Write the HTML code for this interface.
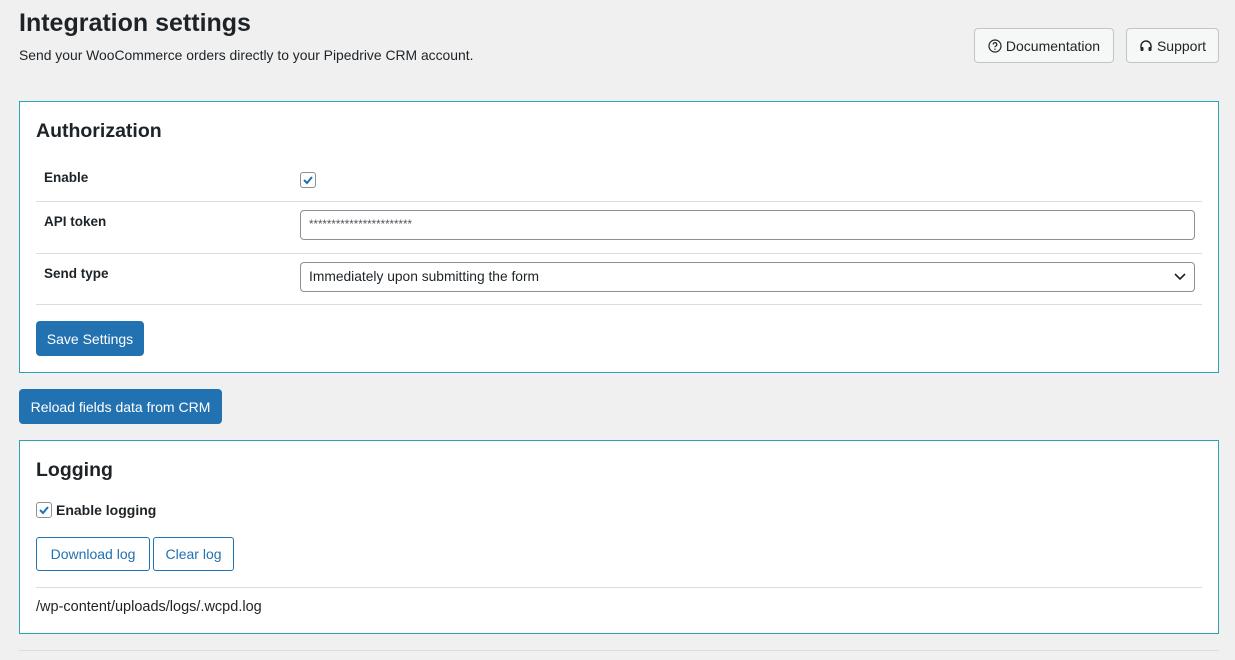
<!DOCTYPE html>
<html><head><meta charset="utf-8"><style>
*{box-sizing:border-box}
body{margin:0;width:1235px;height:660px;background:#f0f0f1;font-family:"Liberation Sans",sans-serif;color:#1d2327;font-size:14px;position:relative;overflow:hidden}
.a{position:absolute}
h1{position:absolute;left:19px;top:9px;margin:0;font-size:25px;font-weight:700;color:#1d2327}
.sub{left:19px;top:47px;font-size:13.9px}
.hb{position:absolute;top:28px;height:35px;border:1px solid #c3c4c7;border-radius:4px;background:#f6f7f7;font-size:14px;display:flex;align-items:center;justify-content:center;gap:4px}
.box{position:absolute;left:19px;width:1200px;background:#fff;border:1px solid #2ba3b3}
.box h2{position:absolute;left:16px;margin:0;font-size:19.5px;font-weight:700}
.lab{position:absolute;left:24px;font-weight:700;font-size:13.5px}
.hr{position:absolute;left:16px;right:16px;height:1px;background:#dcdcde}
.inp{position:absolute;left:280px;width:895px;height:30px;border:1px solid #8c8f94;border-radius:4px;font-size:13.8px;padding:6px 8px}
.btn{position:absolute;background:#2271b1;color:#fff;border-radius:4px;font-size:14px;display:flex;align-items:center;justify-content:center}
.ob{position:absolute;top:96px;height:34px;border:1px solid #2271b1;color:#2271b1;border-radius:3px;font-size:14px;display:flex;align-items:center;justify-content:center}
.cb{position:absolute;width:16px;height:16px;border:1px solid #8c8f94;border-radius:3px;background:#fff}
</style></head><body>
<h1>Integration settings</h1>
<div class="a sub">Send your WooCommerce orders directly to your Pipedrive CRM account.</div>
<div class="hb" style="left:974px;width:140px"><svg width="14" height="14" viewBox="0 0 14 14"><circle cx="7" cy="7" r="6" fill="none" stroke="#1d2327" stroke-width="1.2"/><path d="M5.2 5.5a1.8 1.8 0 1 1 2.5 1.6c-.5.3-.7.6-.7 1.2" fill="none" stroke="#1d2327" stroke-width="1.2"/><circle cx="7" cy="10.2" r=".7" fill="#1d2327"/></svg>Documentation</div>
<div class="hb" style="left:1126px;width:93px"><svg width="14" height="14" viewBox="0 0 14 14"><path d="M2 9V7a5 5 0 0 1 10 0v2" fill="none" stroke="#1d2327" stroke-width="1.4"/><rect x="1.5" y="8" width="3" height="4" rx="1" fill="#1d2327"/><rect x="9.5" y="8" width="3" height="4" rx="1" fill="#1d2327"/></svg>Support</div>

<div class="box" style="top:101px;height:272px">
<h2 style="top:18px">Authorization</h2>
<div class="lab" style="top:68px">Enable</div>
<div class="cb" style="left:280px;top:70px"><svg width="14" height="14" viewBox="0 0 14 14" style="position:absolute;left:0;top:0"><path d="M3 7l3 3 5-6" fill="none" stroke="#2271b1" stroke-width="2"/></svg></div>
<div class="hr" style="top:99px"></div>
<div class="lab" style="top:112px">API token</div>
<div class="inp" style="top:108px;color:#50575e;font-size:11.5px;padding-top:8px">***********************</div>
<div class="hr" style="top:151px"></div>
<div class="lab" style="top:164px">Send type</div>
<div class="inp" style="top:160px">Immediately upon submitting the form<svg style="position:absolute;right:8px;top:10px" width="12" height="8" viewBox="0 0 12 8"><path d="M1 1l5 5 5-5" fill="none" stroke="#1d2327" stroke-width="1.6"/></svg></div>
<div class="hr" style="top:202px"></div>
<div class="btn" style="left:16px;top:219px;width:108px;height:35px">Save Settings</div>
</div>

<div class="btn" style="left:19px;top:389px;width:203px;height:35px">Reload fields data from CRM</div>

<div class="box" style="top:440px;height:194px">
<h2 style="top:18px">Logging</h2>
<div class="cb" style="left:16px;top:61px"><svg width="14" height="14" viewBox="0 0 14 14" style="position:absolute;left:0;top:0"><path d="M3 7l3 3 5-6" fill="none" stroke="#2271b1" stroke-width="2"/></svg></div>
<div class="a" style="left:36px;top:61px;font-weight:700">Enable logging</div>
<div class="ob" style="left:16px;width:114px">Download log</div>
<div class="ob" style="left:133px;width:81px">Clear log</div>
<div class="hr" style="top:146px"></div>
<div class="a" style="left:16px;top:158px;font-size:14.5px">/wp-content/uploads/logs/.wcpd.log</div>
</div>
<div class="a" style="left:19px;top:650px;width:1200px;height:1px;background:#dcdcde"></div>
</body></html>
